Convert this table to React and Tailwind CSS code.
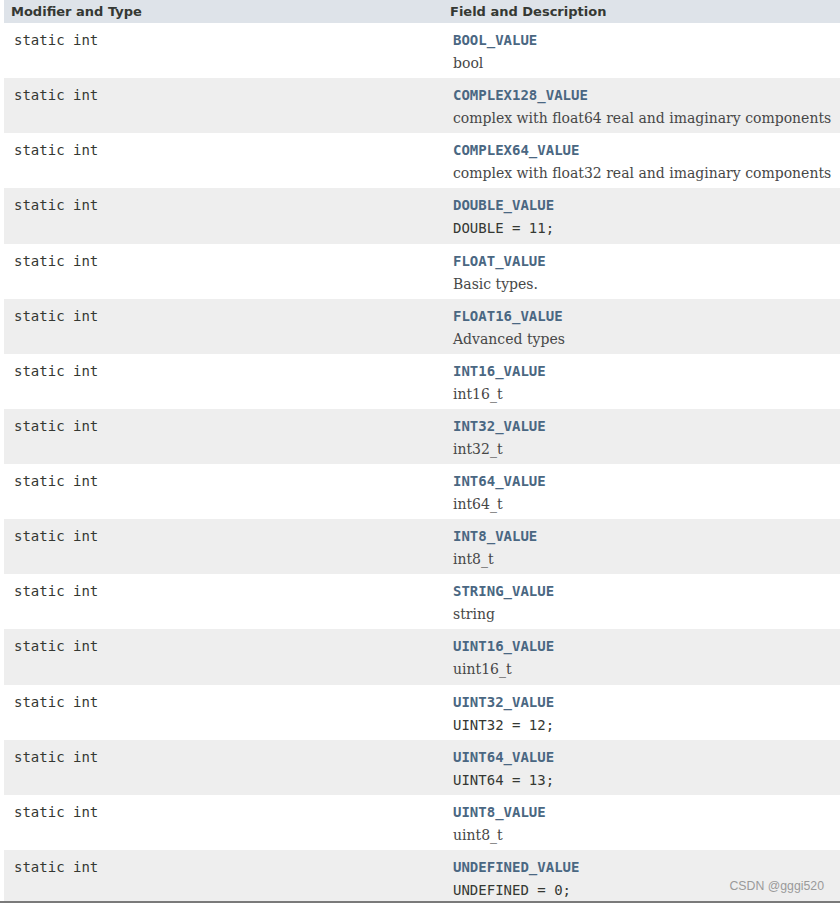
const rows = [
  { name: "BOOL_VALUE", desc: "bool" },
  { name: "COMPLEX128_VALUE", desc: "complex with float64 real and imaginary components" },
  { name: "COMPLEX64_VALUE", desc: "complex with float32 real and imaginary components" },
  { name: "DOUBLE_VALUE", desc: "DOUBLE = 11;", code: true },
  { name: "FLOAT_VALUE", desc: "Basic types." },
  { name: "FLOAT16_VALUE", desc: "Advanced types" },
  { name: "INT16_VALUE", desc: "int16_t" },
  { name: "INT32_VALUE", desc: "int32_t" },
  { name: "INT64_VALUE", desc: "int64_t" },
  { name: "INT8_VALUE", desc: "int8_t" },
  { name: "STRING_VALUE", desc: "string" },
  { name: "UINT16_VALUE", desc: "uint16_t" },
  { name: "UINT32_VALUE", desc: "UINT32 = 12;", code: true },
  { name: "UINT64_VALUE", desc: "UINT64 = 13;", code: true },
  { name: "UINT8_VALUE", desc: "uint8_t" },
  { name: "UNDEFINED_VALUE", desc: "UNDEFINED = 0;", code: true },
]

const mono = "font-['DejaVu_Sans_Mono',monospace]"

const FieldRow = ({ row, odd }) => (
  <div className={`flex h-[55.13px] ${odd ? "bg-[#eeeeee]" : "bg-white"}`}>
    <div className={`w-[439px] shrink-0 pl-[10px] pt-[6px] text-[14px] leading-[22px] text-[#353833] ${mono}`}>
      static int
    </div>
    <div className="flex-1 pl-[10px] pt-[6px] leading-[22px] whitespace-nowrap">
      <div className={`text-[14px] font-bold text-[#4a6782] ${mono}`}>{row.name}</div>
      {row.code ? (
        <div className={`mt-[1px] text-[14px] text-[#353833] ${mono}`}>{row.desc}</div>
      ) : (
        <div className="mt-[1px] text-[14px] text-[#474747] font-['DejaVu_Serif',serif]">{row.desc}</div>
      )}
    </div>
  </div>
)

const App = () => {
  return (
    <div className="relative w-[840px] h-[903px] overflow-hidden bg-white pl-[4px]">
      <div className="flex h-[23px] bg-[#dee3e9] text-[13px] font-bold leading-[23px] text-[#353833] font-['DejaVu_Sans',sans-serif]">
        <div className="w-[439px] shrink-0 pl-[7px]">Modifier and Type</div>
        <div className="flex-1 pl-[7px]">Field and Description</div>
      </div>

      {rows.map((row, i) => (
        <FieldRow key={row.name} row={row} odd={i % 2 === 1} />
      ))}

      {/* watermark + bottom edge */}
      <div className="absolute right-[16px] bottom-[8px] text-[12.3px] text-[#9a9a9a] font-['Liberation_Sans',sans-serif]">
        CSDN @gggi520
      </div>
      <div className="absolute left-0 right-0 bottom-0 h-[2px] bg-[#7a7a7a]"></div>
    </div>
  )
}

export default App
